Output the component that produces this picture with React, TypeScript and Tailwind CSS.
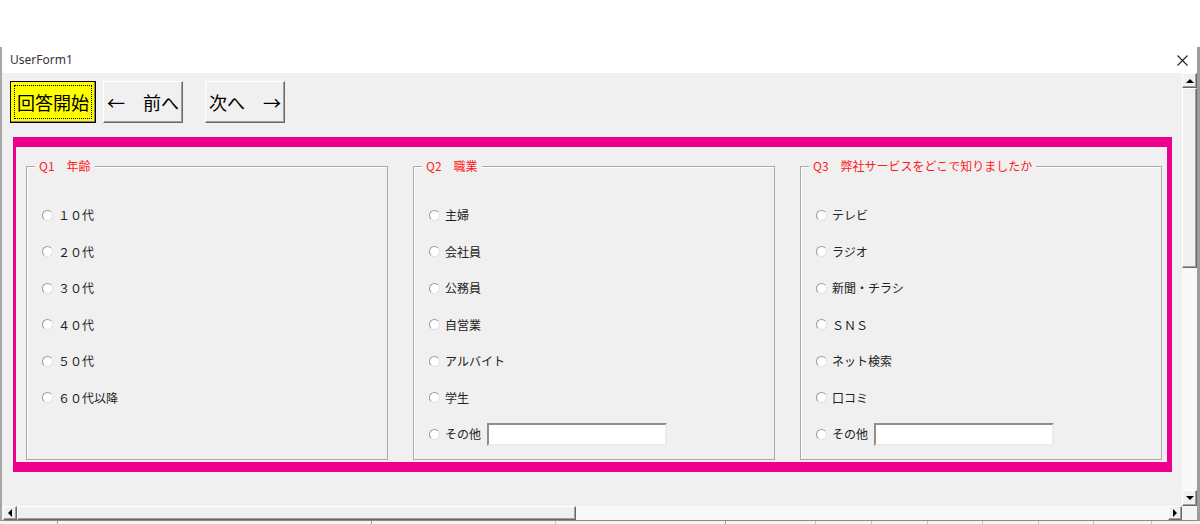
import React from "react";

const jp = { fontFamily: '"Noto Sans CJK JP", "Noto Sans", sans-serif' };
const ui = { fontFamily: '"Noto Sans", "Noto Sans CJK JP", sans-serif' };

interface Group {
  title: string;
  options: string[];
  other?: boolean;
}

const groups: Group[] = [
  { title: "Q1　年齢", options: ["１０代", "２０代", "３０代", "４０代", "５０代", "６０代以降"] },
  { title: "Q2　職業", options: ["主婦", "会社員", "公務員", "自営業", "アルバイト", "学生"], other: true },
  {
    title: "Q3　弊社サービスをどこで知りましたか",
    options: ["テレビ", "ラジオ", "新聞・チラシ", "ＳＮＳ", "ネット検索", "口コミ"],
    other: true,
  },
];

function Radio() {
  return (
    <span className="h-[11px] w-[11px] shrink-0 rounded-full border border-t-[#9a9a9a] border-l-[#9a9a9a] border-r-[#e2e2e2] border-b-[#e2e2e2] bg-white" />
  );
}

function Option({ label, other }: { label: string; other?: boolean }) {
  return (
    <div className="flex h-[36.5px] items-center">
      <Radio />
      <span className="ml-[5px] text-[12px] leading-none text-[#222]">{label}</span>
      {other && (
        <div className="ml-[6px] h-[23px] w-[180px] border-2 border-t-[#8e8e8e] border-l-[#8e8e8e] border-r-[#ececec] border-b-[#ececec] bg-white" />
      )}
    </div>
  );
}

function GroupBox({ group }: { group: Group }) {
  return (
    <fieldset className="h-[302px] w-[362px] border border-[#a9a9a9] shadow-[inset_1px_1px_0_#ffffff]">
      <legend className="ml-[8px] bg-[#f0f0f0] px-[4px] text-[12px] leading-4 text-[#ff1a1a]">
        {group.title}
      </legend>
      <div className="flex flex-col pl-[15px] pt-[23px]">
        {group.options.map((o) => (
          <Option key={o} label={o} />
        ))}
        {group.other && <Option label="その他" other />}
      </div>
    </fieldset>
  );
}

function Tri({ dir }: { dir: "up" | "down" | "left" | "right" }) {
  const pts = {
    up: "0,4 4,0 8,4",
    down: "0,0 8,0 4,4",
    left: "4,0 4,8 0,4",
    right: "0,0 0,8 4,4",
  }[dir];
  const vertical = dir === "up" || dir === "down";
  return (
    <svg width={vertical ? 8 : 4} height={vertical ? 4 : 8} viewBox={vertical ? "0 0 8 4" : "0 0 4 8"}>
      <polygon points={pts} fill="#000" />
    </svg>
  );
}

const bevel =
  "border border-t-white border-l-white border-r-[#696969] border-b-[#696969] shadow-[inset_-1px_-1px_0_#a0a0a0] bg-[#f0f0f0]";

function NavButton({ children, className = "" }: { children: React.ReactNode; className?: string }) {
  return (
    <button
      type="button"
      className={`flex h-[42px] w-[80px] items-center justify-center text-[18px] text-black ${bevel} ${className}`}
      style={jp}
    >
      {children}
    </button>
  );
}

export default function App() {
  return (
    <div className="flex h-[524px] w-[1200px] flex-col overflow-hidden bg-white" style={jp}>
      <div className="h-[47px] shrink-0" />

      {/* UserForm window */}
      <div className="flex flex-1 flex-col border-l-2 border-r-[3px] border-b border-l-[#a7a7a7] border-r-[#9c9c9c] border-b-[#8a8a8a]">
        {/* Title bar */}
        <div className="flex h-[26px] shrink-0 items-center justify-between bg-white pl-[8px] pr-[8px]">
          <span className="text-[12px] text-[#3a3040]" style={ui}>
            UserForm1
          </span>
          <svg width="11" height="11" viewBox="0 0 11 11" className="mr-[1px]">
            <path d="M0.5 0.5 L10.5 10.5 M10.5 0.5 L0.5 10.5" stroke="#222" strokeWidth="1.1" />
          </svg>
        </div>

        {/* Body */}
        <div className="flex h-[433px] shrink-0">
          <div className="flex-1 bg-[#f0f0f0] pt-[8px]">
            <div className="flex pl-[8px]">
              <button
                type="button"
                className="flex h-[42px] w-[86px] border border-black bg-[#ffff00] p-[3px] shadow-[inset_-1px_-1px_0_#808080]"
                style={jp}
              >
                <span className="flex flex-1 items-center justify-center border border-dotted border-black text-[18px] text-black">
                  回答開始
                </span>
              </button>
              <NavButton className="ml-[7px]">←　前へ</NavButton>
              <NavButton className="ml-[22px]">次へ　→</NavButton>
            </div>

            {/* Pink frame */}
            <div className="ml-[11px] mt-[14px] h-[335px] w-[1159px] border-[#ec008c] border-t-[10px] border-b-[10px] border-l-[3px] border-r-[5px]">
              <div className="flex gap-[25px] pl-[10px] pt-[11px]">
                {groups.map((g) => (
                  <GroupBox key={g.title} group={g} />
                ))}
              </div>
            </div>
          </div>

          {/* Vertical scrollbar */}
          <div className="flex w-[15px] flex-col bg-[#f6f6f6]">
            <div className={`flex h-[15px] items-center justify-center ${bevel}`}>
              <Tri dir="up" />
            </div>
            <div className={`h-[180px] ${bevel}`} />
            <div className="flex-1 bg-[#f8f8f8]" />
            <div className={`flex h-[16px] items-center justify-center ${bevel}`}>
              <Tri dir="down" />
            </div>
          </div>
        </div>

        {/* Horizontal scrollbar */}
        <div className="flex h-[14px] shrink-0 bg-[#f0f0f0] pl-[1px]">
          <div className={`flex w-[14px] items-center justify-center ${bevel}`}>
            <Tri dir="left" />
          </div>
          <div className={`w-[559px] ${bevel}`} />
          <div className="flex-1 bg-[#f8f8f8]" />
          <div className={`flex w-[14px] items-center justify-center ${bevel}`}>
            <Tri dir="right" />
          </div>
          <div className="w-[15px] bg-[#f4f4f4]" />
        </div>
      </div>

      {/* Sheet behind */}
      <div className="flex h-[3px] shrink-0 bg-[#f4f4f4]">
        <div className="w-[58px] border-r border-[#9a9a9a]" />
        <div className="w-[314px] border-r border-[#9a9a9a]" />
        <div className="w-[184px] border-r border-[#c0c0c0]" />
        <div className="w-[170px] border-r border-[#9a9a9a]" />
        <div className="w-[90px] border-r border-[#c0c0c0]" />
        <div className="w-[56px] border-r border-[#c0c0c0]" />
        <div className="w-[56px] border-r border-[#c0c0c0]" />
        <div className="w-[55px] border-r border-[#c0c0c0]" />
        <div className="w-[56px] border-r border-[#c0c0c0]" />
        <div className="w-[55px] border-r border-[#c0c0c0]" />
        <div className="w-[58px] border-r border-[#c0c0c0]" />
      </div>
    </div>
  );
}
